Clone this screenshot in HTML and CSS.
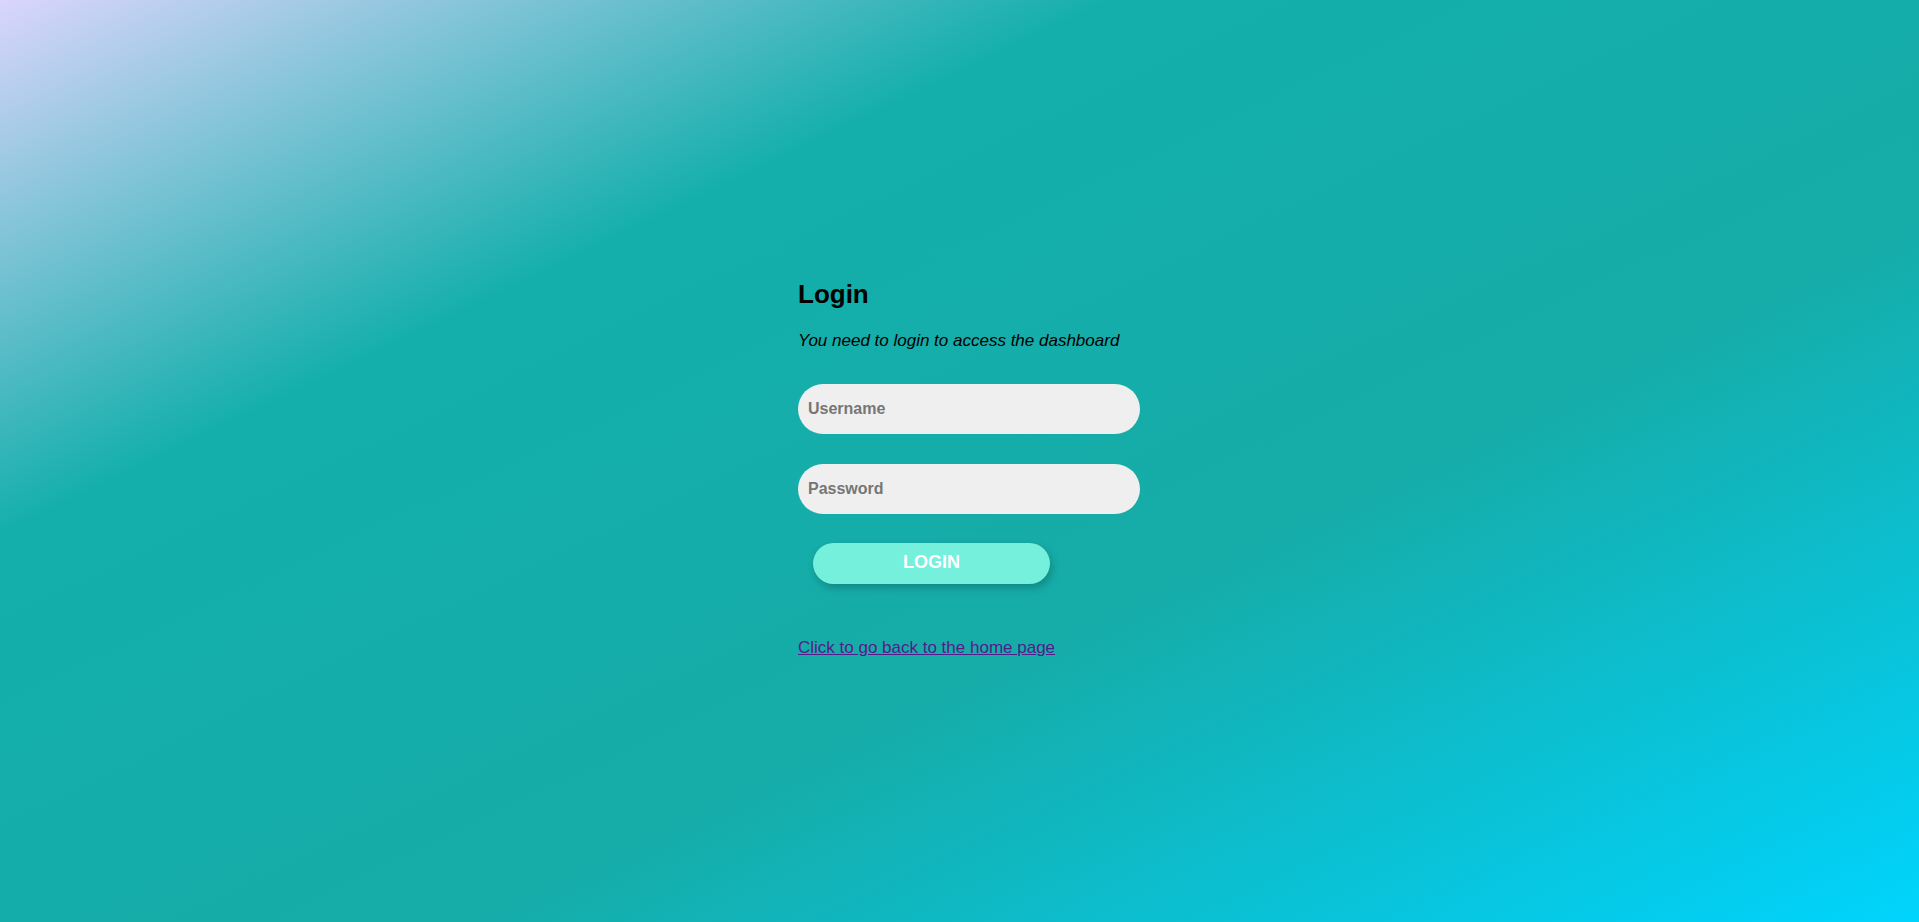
FILE: index.html
```html
<!DOCTYPE html>
<html lang="en">
<head>
<meta charset="utf-8">
<title>Login</title>
<link rel="stylesheet" href="styles.css">
</head>
<body>
<main class="page">
  <form class="login" onsubmit="return false;">
    <h1 class="login-title">Login</h1>
    <p class="login-sub">You need to login to access the dashboard</p>
    <input class="field" type="text" placeholder="Username">
    <input class="field" type="password" placeholder="Password">
    <button class="login-btn" type="submit">LOGIN</button>
    <a class="home-link" href="#">Click to go back to the home page</a>
  </form>
</main>
</body>
</html>
```
FILE: styles.css
```css
* { box-sizing: border-box; }
html, body { margin: 0; padding: 0; height: 100%; }
body {
  font-family: "Liberation Sans", Arial, sans-serif;
  background: linear-gradient(to bottom right, #dad5fc 0%, #14afab 29%, #16aca8 62%, #00d4fd 100%);
  overflow: hidden;
}
.page {
  height: 100vh;
  padding-top: 279px;
}
.login {
  width: 342px;
  margin-left: calc(50% - 161.5px);
  display: flex;
  flex-direction: column;
  align-items: flex-start;
}
.login-title {
  margin: 0;
  font-size: 26px;
  line-height: 30px;
  font-weight: bold;
  color: #000;
}
.login-sub {
  margin: 22px 0 0;
  font-size: 17px;
  line-height: 20px;
  font-style: italic;
  color: #000;
}
.field {
  width: 342px;
  height: 50px;
  margin: 33px 0 0;
  padding: 0 10px;
  border: none;
  border-radius: 25px;
  background: #efefef;
  font-family: "Liberation Sans", Arial, sans-serif;
  font-size: 16px;
  font-weight: bold;
  color: #333;
  outline: none;
}
.field + .field { margin-top: 30px; }
.field::placeholder { color: #767676; opacity: 1; }
.login-btn {
  width: 237px;
  height: 41px;
  margin: 29px 0 0 15px;
  border: none;
  border-radius: 21px;
  background: #74f0dc;
  color: #fff;
  font-family: "Liberation Sans", Arial, sans-serif;
  font-size: 18px;
  font-weight: bold;
  padding: 0 0 2px;
  box-shadow: 2px 4px 8px rgba(0, 0, 0, 0.22);
  cursor: pointer;
}
.home-link {
  margin-top: 54px;
  font-size: 17px;
  line-height: 20px;
  color: #551a8b;
  text-decoration: underline;
}
```
